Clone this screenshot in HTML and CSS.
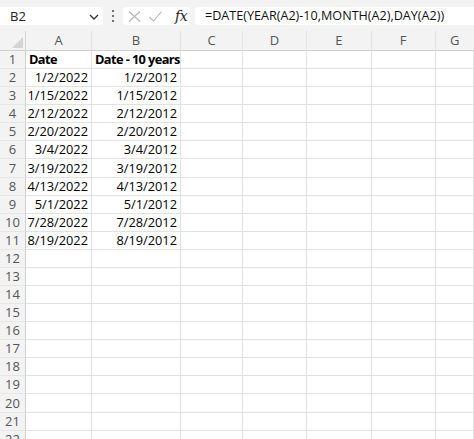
FILE: index.html
```html
<!DOCTYPE html>
<html>
<head>
<meta charset="utf-8">
<link rel="stylesheet" href="styles.css">
</head>
<body>
<div class="app">
  <div class="fbar">
    <div class="namebox">
      <span class="ref">B2</span>
      <svg class="chev" width="10" height="6" viewBox="0 0 10 6"><path d="M1 1 L5 5 L9 1" fill="none" stroke="#333" stroke-width="1.3"/></svg>
    </div>
    <div class="dots"><i></i><i></i><i></i></div>
    <div class="btnbox">
      <svg class="ico" width="13" height="11" viewBox="0 0 13 11"><path d="M1 0.5 L12 10.5 M12 0.5 L1 10.5" stroke="#b4b4b4" stroke-width="1.1" fill="none"/></svg>
      <svg class="ico ok" width="13" height="11" viewBox="0 0 13 11"><path d="M0.5 6 L4.5 10 L12.5 0.5" stroke="#b4b4b4" stroke-width="1.1" fill="none"/></svg>
      <span class="fx">fx</span>
    </div>
    <div class="formula">=DATE(YEAR(A2)-10,MONTH(A2),DAY(A2))</div>
  </div>
  <div class="sheet">
    <div class="corner"><span class="tri"></span></div>
    <div class="ch">A</div><div class="ch">B</div><div class="ch">C</div><div class="ch">D</div><div class="ch">E</div><div class="ch">F</div><div class="ch last">G</div>

    <div class="rh">1</div><div class="c b">Date</div><div class="c b">Date - 10 years</div><div class="c"></div><div class="c"></div><div class="c"></div><div class="c"></div><div class="c"></div>
    <div class="rh">2</div><div class="c n">1/2/2022</div><div class="c n">1/2/2012</div><div class="c"></div><div class="c"></div><div class="c"></div><div class="c"></div><div class="c"></div>
    <div class="rh">3</div><div class="c n">1/15/2022</div><div class="c n">1/15/2012</div><div class="c"></div><div class="c"></div><div class="c"></div><div class="c"></div><div class="c"></div>
    <div class="rh">4</div><div class="c n">2/12/2022</div><div class="c n">2/12/2012</div><div class="c"></div><div class="c"></div><div class="c"></div><div class="c"></div><div class="c"></div>
    <div class="rh">5</div><div class="c n">2/20/2022</div><div class="c n">2/20/2012</div><div class="c"></div><div class="c"></div><div class="c"></div><div class="c"></div><div class="c"></div>
    <div class="rh">6</div><div class="c n">3/4/2022</div><div class="c n">3/4/2012</div><div class="c"></div><div class="c"></div><div class="c"></div><div class="c"></div><div class="c"></div>
    <div class="rh">7</div><div class="c n">3/19/2022</div><div class="c n">3/19/2012</div><div class="c"></div><div class="c"></div><div class="c"></div><div class="c"></div><div class="c"></div>
    <div class="rh">8</div><div class="c n">4/13/2022</div><div class="c n">4/13/2012</div><div class="c"></div><div class="c"></div><div class="c"></div><div class="c"></div><div class="c"></div>
    <div class="rh">9</div><div class="c n">5/1/2022</div><div class="c n">5/1/2012</div><div class="c"></div><div class="c"></div><div class="c"></div><div class="c"></div><div class="c"></div>
    <div class="rh">10</div><div class="c n">7/28/2022</div><div class="c n">7/28/2012</div><div class="c"></div><div class="c"></div><div class="c"></div><div class="c"></div><div class="c"></div>
    <div class="rh">11</div><div class="c n">8/19/2022</div><div class="c n">8/19/2012</div><div class="c"></div><div class="c"></div><div class="c"></div><div class="c"></div><div class="c"></div>
    <div class="rh">12</div><div class="c"></div><div class="c"></div><div class="c"></div><div class="c"></div><div class="c"></div><div class="c"></div><div class="c"></div>
    <div class="rh">13</div><div class="c"></div><div class="c"></div><div class="c"></div><div class="c"></div><div class="c"></div><div class="c"></div><div class="c"></div>
    <div class="rh">14</div><div class="c"></div><div class="c"></div><div class="c"></div><div class="c"></div><div class="c"></div><div class="c"></div><div class="c"></div>
    <div class="rh">15</div><div class="c"></div><div class="c"></div><div class="c"></div><div class="c"></div><div class="c"></div><div class="c"></div><div class="c"></div>
    <div class="rh">16</div><div class="c"></div><div class="c"></div><div class="c"></div><div class="c"></div><div class="c"></div><div class="c"></div><div class="c"></div>
    <div class="rh">17</div><div class="c"></div><div class="c"></div><div class="c"></div><div class="c"></div><div class="c"></div><div class="c"></div><div class="c"></div>
    <div class="rh">18</div><div class="c"></div><div class="c"></div><div class="c"></div><div class="c"></div><div class="c"></div><div class="c"></div><div class="c"></div>
    <div class="rh">19</div><div class="c"></div><div class="c"></div><div class="c"></div><div class="c"></div><div class="c"></div><div class="c"></div><div class="c"></div>
    <div class="rh">20</div><div class="c"></div><div class="c"></div><div class="c"></div><div class="c"></div><div class="c"></div><div class="c"></div><div class="c"></div>
    <div class="rh">21</div><div class="c"></div><div class="c"></div><div class="c"></div><div class="c"></div><div class="c"></div><div class="c"></div><div class="c"></div>
    <div class="rh">22</div><div class="c"></div><div class="c"></div><div class="c"></div><div class="c"></div><div class="c"></div><div class="c"></div><div class="c"></div>
  </div>
</div>
</body>
</html>
```
FILE: styles.css
```css
html, body {
  margin: 0;
  padding: 0;
  background: #ffffff;
  overflow: hidden;
}
.app {
  width: 474px;
  height: 439px;
  overflow: hidden;
  font-family: "Open Sans", "Noto Sans", sans-serif;
  color: #000;
}
.fbar {
  height: 31px;
  background: #f3f3f3;
  display: flex;
  align-items: flex-start;
  padding-top: 7px;
  box-sizing: border-box;
}
.namebox {
  width: 103px;
  height: 18px;
  background: #fff;
  border-radius: 0 4px 4px 0;
  display: flex;
  align-items: center;
  justify-content: space-between;
  padding: 0 4px 0 10px;
  box-sizing: border-box;
  font-size: 13px;
  color: #222;
}
.chev { margin-top: 1px; }
.dots {
  width: 20px;
  height: 18px;
  display: flex;
  flex-direction: column;
  align-items: center;
  justify-content: center;
  gap: 3px;
}
.dots i {
  display: block;
  width: 2px;
  height: 2px;
  background: #444;
  border-radius: 1px;
}
.btnbox {
  width: 67px;
  height: 18px;
  background: #fff;
  border-radius: 4px;
  display: flex;
  align-items: center;
  padding-left: 5px;
  gap: 7px;
  box-sizing: border-box;
}
.ico.ok { margin-left: 1px; }
.fx {
  font-family: "DejaVu Serif", "Liberation Serif", serif;
  font-style: italic;
  font-size: 14px;
  color: #222;
  margin-left: 6px;
  letter-spacing: -0.5px;
}
.formula {
  margin-left: 5px;
  flex: 1;
  height: 18px;
  background: #fff;
  border-radius: 4px 0 0 4px;
  font-size: 12.6px;
  line-height: 18px;
  padding-left: 10px;
  color: #111;
  white-space: nowrap;
}
.sheet {
  display: grid;
  grid-template-columns: 26px 66px 89px 62px 64px 64.5px 64px 1fr;
  grid-template-rows: 20px repeat(22, 18.08px);
}
.corner, .ch, .rh {
  background: #f3f3f3;
  color: #555;
  font-size: 13px;
  box-sizing: border-box;
}
.corner {
  position: relative;
  border-bottom: 1px solid #cfcfcf;
  border-right: 1px solid #d8d8d8;
}
.tri {
  position: absolute;
  right: 2px;
  bottom: 2px;
  width: 0;
  height: 0;
  border-left: 11px solid transparent;
  border-bottom: 11px solid #d4d4d4;
}
.ch {
  border-bottom: 1px solid #cfcfcf;
  border-right: 1px solid #e2e2e2;
  display: flex;
  align-items: flex-end;
  justify-content: center;
  line-height: 17px;
  padding-bottom: 1px;
}
.ch.last { border-right: none; }
.rh {
  border-right: 1px solid #cfcfcf;
  border-bottom: 1px solid #e6e6e6;
  display: flex;
  align-items: flex-end;
  justify-content: center;
  line-height: 17px;
}
.c {
  border-right: 1px solid #e2e2e2;
  border-bottom: 1px solid #e2e2e2;
  box-sizing: border-box;
  font-size: 12.8px;
  line-height: 17px;
  display: flex;
  align-items: flex-end;
  padding: 0 3px;
  white-space: nowrap;
  color: #000;
}
.c.b { font-weight: 700; letter-spacing: -0.6px; }
.c.n { justify-content: flex-end; }
```
